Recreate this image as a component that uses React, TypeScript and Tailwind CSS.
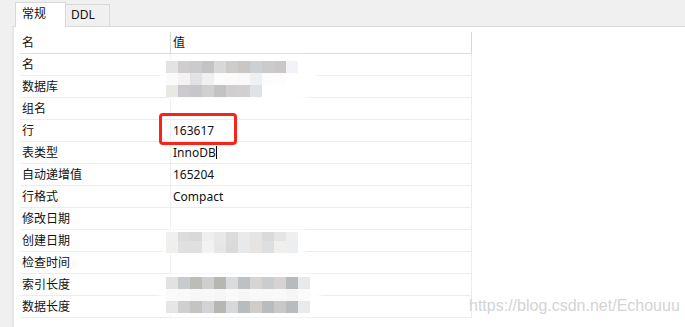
import React from 'react';

const rows: { label: string; value?: React.ReactNode }[] = [
    { label: '名' },
    { label: '数据库' },
    { label: '组名' },
    { label: '行', value: '163617' },
    {
        label: '表类型',
        value: (
            <>
                InnoDB<span className="inline-block w-px h-[13px] bg-black align-[-2px]" />
            </>
        ),
    },
    { label: '自动递增值', value: '165204' },
    { label: '行格式', value: 'Compact' },
    { label: '修改日期' },
    { label: '创建日期' },
    { label: '检查时间' },
    { label: '索引长度' },
    { label: '数据长度' },
];

// mosaic blur over hidden values, one row of 12px squares each
const mosaicTop: string[][] = [
    ['#e4e3e1', '#cfcdcd', '#cccbcb', '#c2c3c5', '#d8d8d8', '#cdccca', '#cac6c6', '#cbd0d4', '#cccaca', '#c9c8c6', '#f1f3f6'],
    ['#fafafa', '#f3f3f3', '#e2e2e4', '#eff0f2', '#fbfbfb', '#fbfbfb', '#f9f9f9', '#eff1f1', '#fcfcfc', '#fdfdfd', '#ffffff'],
    ['#e9e8e4', '#cbc9cd', '#c6c7c9', '#d1d0ce', '#c2c3c5', '#d0cfcd', '#d1cfcf', '#dfe2e6'],
];

const mosaicMid: string[][] = [
    ['#f1f0ee', '#dcdcde', '#d9d9db', '#f0efed', '#e8e8e8', '#dcdcdc', '#e9eaec', '#e6e4e4', '#d8dadc', '#e7e5e4', '#eeeff1'],
    ['#efefed', '#e0e0e0', '#dfe1e0', '#f2f2f0', '#e6e6e6', '#dadada', '#e8e9eb', '#e6e3e1', '#dcdedf', '#efefed', '#eceef0'],
];

const mosaicBottom: string[][] = [
    ['#e3e2e0', '#c8cbce', '#bdbcb8', '#cfcfcf', '#b6b7b2', '#dadbdd', '#bec1c4', '#d7d4d4', '#caccce', '#d6d3d2', '#b8bbbe', '#e8e9eb'],
    ['#fafafa', '#f9f9f9', '#f7f7f7', '#f8f8f8', '#f6f6f6', '#fafafa', '#f7f7f7', '#f9f9f9', '#f8f8f8', '#f9f9f9', '#f6f6f6', '#fbfbfb'],
    ['#e6e6e6', '#cfcfcf', '#c4c4c2', '#d2d3d5', '#b6b7b2', '#d6d8da', '#b7bcbf', '#cfccc9', '#b8bcbf', '#cac8c6', '#b9bcbf', '#e9eaec'],
];

const Mosaic = ({ data, heights, className }: { data: string[][]; heights: string[]; className: string }) => (
    <div className={`absolute flex flex-col ${className}`}>
        {data.map((line, i) => (
            <div key={i} className={`flex ${heights[i]}`}>
                {line.map((c, j) => (
                    <div key={j} className="w-[12px] h-full" style={{ backgroundColor: c }} />
                ))}
            </div>
        ))}
    </div>
);

export default function App() {
    return (
        <div
            className="relative w-[685px] h-[327px] overflow-hidden bg-[#f0f0f0] flex flex-col text-[12px] text-[#111]"
            style={{ fontFamily: '"Noto Sans", "Noto Sans CJK SC", sans-serif' }}
        >
            {/* tabs */}
            <div className="h-[26px] flex items-end pl-[15px] shrink-0">
                <div className="relative z-10 -mb-px h-[25px] w-[51px] bg-white border border-b-0 border-[#d9d9d9] pl-[6px] pt-[3px] leading-[16px]">
                    常规
                </div>
                <div className="h-[22px] w-[44px] border border-b-0 border-l-0 border-[#d9d9d9] bg-[#f0f0f0] pl-[5px] pt-[2px] leading-[16px]">
                    DDL
                </div>
            </div>

            {/* panel */}
            <div className="flex-1 ml-[12px] bg-white border-t border-[#d8d8d8] border-l-2 border-l-[#e6e6e6] pl-[6px] pt-[5px]">
                <div className="w-[452px]">
                    <div className="flex h-[22px] border-b border-[#dedede] leading-[21px]">
                        <div className="w-[151px] pl-[2px] border-r border-[#d6d6d6]">名</div>
                        <div className="flex-1 pl-[2px] border-r border-[#d6d6d6]">值</div>
                    </div>
                    {rows.map((r) => (
                        <div key={r.label} className="flex h-[22px] border-b border-[#ececec] leading-[21px]">
                            <div className="w-[151px] pl-[2px] border-r border-[#f0f0f0]">{r.label}</div>
                            <div className="flex-1 pl-[2px] border-r border-[#ececec]">{r.value}</div>
                        </div>
                    ))}
                </div>
            </div>

            {/* blurred values */}
            <div className="absolute left-[160px] top-[56px] w-[158px] h-[44px] bg-white rounded-[20px] blur-[2px]" />
            <Mosaic data={mosaicTop} heights={['h-[12px]', 'h-[12px]', 'h-[12px]']} className="left-[166px] top-[61px]" />
            <div className="absolute left-[160px] top-[229px] w-[150px] h-[26px] bg-white rounded-[12px] blur-[2px]" />
            <Mosaic data={mosaicMid} heights={['h-[9px]', 'h-[12px]']} className="left-[166px] top-[232px]" />
            <div className="absolute left-[160px] top-[273px] w-[160px] h-[44px] bg-white rounded-[16px] blur-[2px]" />
            <Mosaic data={mosaicBottom} heights={['h-[12px]', 'h-[12px]', 'h-[12px]']} className="left-[166px] top-[277px]" />

            {/* highlight */}
            <div className="absolute left-[159px] top-[113px] w-[78px] h-[32px] border-[3px] border-[#f5251c] rounded-[4px]" />

            {/* watermark */}
            <div
                className="absolute left-[469px] top-[296px] text-[16px] leading-[20px] text-[#d4d4d4] whitespace-nowrap"
                style={{ fontFamily: '"Liberation Sans", Arial, sans-serif' }}
            >
                https://blog.csdn.net/Echouuu
            </div>
        </div>
    );
}
